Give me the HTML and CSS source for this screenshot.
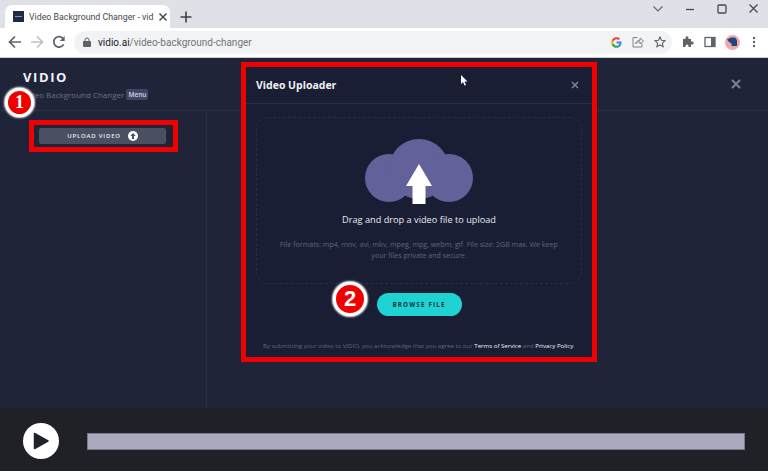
FILE: index.html
```html
<!DOCTYPE html>
<html lang="en">
<head>
<meta charset="utf-8">
<title>Video Background Changer - VIDIO</title>
<link rel="stylesheet" href="styles.css">
</head>
<body>
<div class="tabstrip">
  <div class="tab">
    <span class="favicon"><span class="favicon-line"></span></span>
    <span class="tab-title">Video Background Changer - vid</span>
    <svg class="tab-close" width="10" height="10" viewBox="0 0 10 10"><path d="M1.500 1.500l7 7M8.500 1.500l-7 7" stroke="#3c4043" stroke-width="1.400"/></svg>
  </div>
  <svg class="new-tab" width="12" height="12" viewBox="0 0 12 12"><path d="M6 .5v11M.5 6h11" stroke="#3c4043" stroke-width="1.600"/></svg>
  <div class="window-controls">
    <svg width="12" height="12" viewBox="0 0 12 12"><path d="M1.500 3.500L6 8l4.500-4.500" fill="none" stroke="#5f6368" stroke-width="1.100"/></svg>
    <svg width="12" height="12" viewBox="0 0 12 12"><path d="M2 6.500h8" stroke="#45484d" stroke-width="1.300"/></svg>
    <svg width="12" height="12" viewBox="0 0 12 12"><rect x="2" y="2" width="8" height="8" rx="1" fill="none" stroke="#45484d" stroke-width="1.300"/></svg>
    <svg width="12" height="12" viewBox="0 0 12 12"><path d="M1.500 1.500l8 8M9.500 1.500l-8 8" stroke="#45484d" stroke-width="1.200"/></svg>
  </div>
</div>
<div class="toolbar">
  <svg class="nav" width="14" height="14" viewBox="0 0 14 14"><path d="M13 7H2M7 1.500L1.500 7 7 12.500" fill="none" stroke="#5f6368" stroke-width="1.700"/></svg>
  <svg class="nav" width="14" height="14" viewBox="0 0 14 14"><path d="M1 7h11M7 1.500L12.500 7 7 12.500" fill="none" stroke="#bdc1c6" stroke-width="1.700"/></svg>
  <svg class="nav" width="14" height="14" viewBox="0 0 14 14"><path d="M11.600 9.300A5.200 5.200 0 1 1 11.200 3.800" fill="none" stroke="#5f6368" stroke-width="1.700"/><path d="M12.700 1v5h-5z" fill="#5f6368"/></svg>
  <div class="omnibox">
    <svg class="lock" width="8" height="10" viewBox="0 0 8 10"><path d="M2 4.500V3a2 2 0 0 1 4 0v1.500" fill="none" stroke="#5f6368" stroke-width="1"/><rect y="4" width="8" height="6" rx="1" fill="#5f6368"/></svg>
    <span class="url"><span class="url-host">vidio.ai</span>/video-background-changer</span>
    <svg class="omni-g" width="11" height="11" viewBox="0 0 24 24"><path d="M23 12.300c0-.8-.1-1.600-.2-2.300H12v4.400h6.200a5.300 5.300 0 0 1-2.300 3.400v2.900h3.700c2.100-2 3.400-4.900 3.400-8.400z" fill="#4285f4"/><path d="M12 23.500c3.100 0 5.700-1 7.600-2.800l-3.700-2.900c-1 .7-2.300 1.100-3.900 1.100-3 0-5.500-2-6.400-4.700H1.800v3c1.900 3.800 5.800 6.300 10.200 6.300z" fill="#34a853"/><path d="M5.600 14.200a6.900 6.900 0 0 1 0-4.400v-3H1.800a11.500 11.500 0 0 0 0 10.400z" fill="#fbbc05"/><path d="M12 5.100c1.700 0 3.200.6 4.400 1.700l3.300-3.300A11.500 11.500 0 0 0 1.800 6.800l3.800 3C6.500 7.100 9 5.100 12 5.100z" fill="#ea4335"/></svg>
    <svg class="omni-share" width="12" height="12" viewBox="0 0 12 12"><path d="M5.500 1.500H1v9.500h9V7.500" fill="none" stroke="#80868b" stroke-width="1"/><path d="M3.500 8C4 5.500 5.500 4.300 8 4.300V2l3.500 3L8 8V5.800C6 5.800 4.500 6.500 3.500 8z" fill="none" stroke="#80868b" stroke-width="1"/></svg>
    <svg class="omni-star" width="12" height="12" viewBox="0 0 12 12"><path d="M6 1l1.500 3.300 3.500.4-2.600 2.400.7 3.600L6 8.900l-3.100 1.800.7-3.600L1 4.700l3.500-.4z" fill="none" stroke="#5f6368" stroke-width="1.100"/></svg>
  </div>
  <div class="tool-icons">
    <svg width="12" height="12" viewBox="0 0 12 12"><path d="M0 4h2.500V2.800a1.500 1.500 0 0 1 3 0V4H8v2.500h1.200a1.500 1.500 0 0 1 0 3H8V12H5.500v-1a1.500 1.500 0 0 0-3 0v1H0z" fill="#5f6368" transform="translate(1 -1)"/></svg>
    <svg width="12" height="12" viewBox="0 0 12 12"><rect x="1" y="1.500" width="10" height="9" fill="none" stroke="#5f6368" stroke-width="1.300"/><rect x="7" y="1.500" width="4" height="9" fill="#5f6368"/></svg>
    <span class="avatar"><svg width="10" height="10" viewBox="0 0 10 10"><path d="M0 2.500L4 .5h4l2 2.500v6H4.500V6.500L2 5z" fill="#1c4a7a"/></svg></span>
    <svg width="4" height="12" viewBox="0 0 4 12"><circle cx="2" cy="2" r="1.200" fill="#5f6368"/><circle cx="2" cy="6" r="1.200" fill="#5f6368"/><circle cx="2" cy="10" r="1.200" fill="#5f6368"/></svg>
  </div>
</div>
<div class="app">
  <header class="app-header">
    <div class="brand">VIDIO</div>
    <div class="subtitle">Video Background Changer <span class="menu-tag">Menu</span></div>
    <svg class="app-close" width="10" height="10" viewBox="0 0 10 10"><path d="M1 1l8 8M9 1L1 9" stroke="#7d8190" stroke-width="2"/></svg>
  </header>
  <div class="app-body">
    <aside class="sidebar">
      <div class="upload-frame">
        <button class="upload-btn">UPLOAD VIDEO
          <svg width="10" height="10" viewBox="0 0 10 10"><circle cx="5" cy="5" r="5" fill="#fff"/><path d="M5 2L2.300 5H4v3h2V5h1.700z" fill="#4a4f62"/></svg>
        </button>
      </div>
    </aside>
  </div>
  <span class="step step-one">1</span>
  <section class="modal">
    <div class="modal-head">
      <h2>Video Uploader</h2>
      <svg width="8" height="8" viewBox="0 0 8 8"><path d="M1 1l6 6M7 1L1 7" stroke="#7d8190" stroke-width="1.600"/></svg>
    </div>
    <div class="dropzone">
      <svg class="cloud" width="108" height="66" viewBox="0 0 108 66"><g fill="#62619a"><circle cx="24" cy="39" r="24"/><circle cx="54" cy="30" r="30"/><circle cx="84" cy="39" r="24"/></g><path d="M54 25L67 47H60.500V65H47.500V47H41z" fill="#fff"/></svg>
      <p class="drop-title">Drag and drop a video file to upload</p>
      <p class="drop-note">File formats: mp4, mov, avi, mkv, mpeg, mpg, webm, gif. File size: 2GB max. We keep your files private and secure.</p>
    </div>
    <div class="browse-row">
      <button class="browse-btn">BROWSE FILE</button>
      <span class="step step-two">2</span>
    </div>
    <p class="terms">By submitting your video to VIDIO, you acknowledge that you agree to our <b>Terms of Service</b> and <b>Privacy Policy</b>.</p>
  </section>
  <svg class="cursor" width="7" height="11" viewBox="0 0 7 11"><path d="M0 0v9l2-2 1.500 3.500 1.500-.6L3.500 6.500H6.500z" fill="#fff"/></svg>
</div>
<footer class="player">
  <svg width="36" height="36" viewBox="0 0 36 36"><circle cx="18" cy="18" r="18" fill="#fff"/><path d="M11.500 10.500L25 18l-13.500 7.500z" fill="#20222a" stroke="#20222a" stroke-width="1.500" stroke-linejoin="round"/></svg>
  <div class="timeline"></div>
</footer>
</body>
</html>
```
FILE: styles.css
```css
* { box-sizing: border-box; }
html, body { margin: 0; height: 100%; }
body {
  width: 768px;
  height: 471px;
  overflow: hidden;
  display: flex;
  flex-direction: column;
  font-family: "Open Sans", "Liberation Sans", sans-serif;
  background: #1f2438;
}
.tabstrip {
  height: 28px;
  flex: none;
  display: flex;
  align-items: flex-end;
  background: #dee1e6;
  padding-left: 5px;
}
.tab {
  width: 165px;
  height: 23px;
  display: flex;
  align-items: center;
  gap: 5px;
  padding: 0 6px 0 8px;
  background: #fff;
  border-radius: 7px 7px 0 0;
}
.favicon {
  width: 11px;
  height: 11px;
  flex: none;
  background: #1f2a44;
  display: flex;
  align-items: center;
  justify-content: center;
}
.favicon-line { width: 7px; height: 1px; background: #8890a0; }
.tab-title {
  flex: 1;
  font: 8.800px Roboto, "Liberation Sans", sans-serif;
  color: #45484d;
  white-space: nowrap;
}
.tab-close { flex: none; margin-right: 5px; }
.new-tab { margin: 0 0 5px 10px; }
.window-controls {
  margin-left: auto;
  align-self: flex-start;
  padding: 3px 8px 0 0;
  display: flex;
  gap: 20px;
}
.toolbar {
  height: 30px;
  flex: none;
  display: flex;
  align-items: center;
  background: #fff;
  border-bottom: 1px solid #c8cacd;
  padding: 0 0 1px 8px;
}
.nav { margin-right: 8px; flex: none; }
.omnibox {
  width: 598px;
  height: 23px;
  flex: none;
  display: flex;
  align-items: center;
  background: #f1f3f4;
  border-radius: 12px;
  padding: 0 6px 0 9px;
}
.lock { flex: none; }
.url {
  margin-left: 7px;
  flex: 1;
  font: 10px Roboto, "Liberation Sans", sans-serif;
  color: #70757a;
}
.url-host { color: #202124; }
.omni-share { margin-left: 10px; }
.omni-star { margin-left: 10px; }
.tool-icons {
  flex: 1;
  display: grid;
  grid-template-columns: repeat(4, 22px);
  align-items: center;
  justify-items: center;
  padding-left: 5px;
}
.avatar {
  width: 15px;
  height: 15px;
  border-radius: 50%;
  background: #f4a6ac;
  display: flex;
  align-items: center;
  justify-content: center;
}
.app {
  flex: 1;
  position: relative;
  display: flex;
  flex-direction: column;
  background: #1f2438;
  min-height: 0;
}
.app-header {
  height: 53px;
  flex: none;
  position: relative;
  padding: 13px 0 0 23px;
  border-bottom: 1px solid #2b3044;
}
.brand {
  font-size: 13px;
  font-weight: 700;
  letter-spacing: 1.600px;
  color: #f1f2f5;
  line-height: 13px;
}
.subtitle {
  margin-top: 4px;
  font-size: 8px;
  line-height: 14px;
  color: #6e7285;
  white-space: nowrap;
}
.menu-tag {
  font-size: 6.500px;
  font-weight: 600;
  padding: 1px 2px;
  border-radius: 2px;
  background: #3f4568;
  color: #d6d8e4;
  vertical-align: 1px;
}
.app-close { position: absolute; right: 27px; top: 21px; }
.app-body { flex: 1; display: flex; min-height: 0; }
.sidebar {
  width: 207px;
  border-right: 1px solid #2b3044;
  padding: 9px 0 0 29px;
}
.upload-frame {
  width: 149px;
  height: 32px;
  border: 5px solid #f00000;
  padding: 3px 5px;
  background: #1f2438;
}
.upload-btn {
  width: 127px;
  height: 16px;
  border: 0;
  padding: 0;
  border-radius: 2px;
  background: #4a4f62;
  color: #eceded;
  font: 600 6px "Open Sans", sans-serif;
  letter-spacing: .8px;
  display: flex;
  align-items: center;
  justify-content: center;
  gap: 7px;
}
.step {
  position: absolute;
  width: 29px;
  height: 29px;
  border-radius: 50%;
  background: #f00000;
  border: 3px solid #fff;
  box-shadow: 0 0 2px 1px #fff;
  color: #fff;
  font: 700 18px/23px "Liberation Serif", serif;
  text-align: center;
}
.step-one { left: 5px; top: 30px; }
.modal {
  position: absolute;
  left: 241px;
  top: 4px;
  width: 356px;
  height: 300px;
  border: 5px solid #f00000;
  background: #1a1e34;
  display: flex;
  flex-direction: column;
}
.modal-head {
  height: 37px;
  flex: none;
  display: flex;
  align-items: center;
  justify-content: space-between;
  padding: 0 13px 0 10px;
  border-bottom: 1px solid #2a2e45;
}
.modal-head h2 {
  margin: 0;
  font-size: 10.500px;
  font-weight: 700;
  color: #f0f1f4;
}
.dropzone {
  margin: 13px 10px 0;
  height: 167px;
  flex: none;
  border: 1px dashed #282c44;
  border-radius: 12px;
  display: flex;
  flex-direction: column;
  align-items: center;
  padding-top: 21px;
}
.cloud { flex: none; }
.drop-title {
  margin: 9px 0 0;
  font-size: 9.200px;
  font-weight: 500;
  line-height: 12px;
  color: #e8e9ed;
}
.drop-note {
  margin: 13px 0 0;
  width: 285px;
  font-size: 7.100px;
  line-height: 11px;
  color: #62657c;
  text-align: center;
}
.browse-row {
  position: relative;
  display: flex;
  justify-content: center;
  margin-top: 9px;
}
.browse-btn {
  width: 85px;
  height: 23px;
  border: 0;
  border-radius: 12px;
  background: #1fd3d3;
  color: #0f3640;
  font: 700 6.200px "Open Sans", sans-serif;
  letter-spacing: 1.200px;
}
.step-two {
  left: 87px;
  top: -11px;
  width: 34px;
  height: 34px;
  font: 700 22px/28px "Liberation Sans", sans-serif;
}
.terms {
  margin: 25px 0 0;
  text-align: center;
  font-size: 6.100px;
  line-height: 10px;
  color: #62657c;
  white-space: nowrap;
}
.terms b { color: #f0f1f4; font-weight: 500; }
.cursor { position: absolute; left: 461px; top: 17px; }
.player {
  height: 63px;
  flex: none;
  display: flex;
  align-items: center;
  gap: 28px;
  padding: 3px 23px 0;
  background: #202126;
}
.timeline {
  width: 658px;
  height: 17px;
  background: #aba9bd;
  border: 1px solid #7a7886;
}
```
